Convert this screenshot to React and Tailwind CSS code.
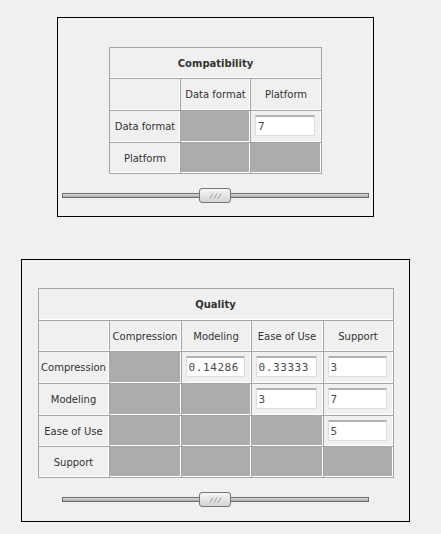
const sans = "font-['DejaVu_Sans',sans-serif]"

function Cell({ kind, value, height }) {
    const base = `border-l border-t border-[#a5a5a5] shadow-[inset_-1px_-1px_0_#ffffff] ${height}`
    if (kind === 'gray') return <div className={`${base} bg-[#acacac]`} />
    if (kind === 'input') {
        return (
            <div className={base}>
                <input
                    readOnly
                    value={value}
                    className="mt-[4px] ml-[4px] block h-[21px] w-[calc(100%-10px)] border border-[#dedede] border-t-2 border-t-[#b3b3b3] bg-white pl-[2px] font-['DejaVu_Sans_Mono',monospace] text-[11px] tracking-[0.6px] text-[#4a4a4a] outline-none"
                />
            </div>
        )
    }
    return (
        <div className={`${base} flex items-center justify-center text-[10px] text-[#333]`}>{value}</div>
    )
}

function Matrix({ title, labels, cells, cols, heights }) {
    return (
        <div className={`grid ${cols} border-r border-b border-[#a5a5a5] ${sans}`}>
            <div className={`col-span-full flex items-center justify-center border-l border-t border-[#a5a5a5] shadow-[inset_0_-1px_0_#ffffff] text-[10px] font-bold text-[#333] ${heights[0]}`}>
                {title}
            </div>
            <Cell kind="label" value="" height={heights[1]} />
            {labels.map((l) => (
                <Cell key={l} kind="label" value={l} height={heights[1]} />
            ))}
            {labels.map((row, i) => (
                <div key={row} className="contents">
                    <Cell kind="label" value={row} height={heights[i + 2]} />
                    {cells[i].map((c, j) =>
                        c === null ? (
                            <Cell key={j} kind="gray" height={heights[i + 2]} />
                        ) : (
                            <Cell key={j} kind="input" value={c} height={heights[i + 2]} />
                        )
                    )}
                </div>
            ))}
        </div>
    )
}

function Slider() {
    return (
        <div className="relative h-[15px] w-[307px]">
            <div className="absolute left-0 right-0 top-[5px] h-[5px] border border-[#6e6e6e] bg-gradient-to-b from-[#dcdcdc] to-[#a9a9a9]" />
            <div className="absolute left-[137px] top-0 flex h-[15px] w-[32px] items-center justify-center rounded-[3px] border border-[#767676] bg-gradient-to-b from-[#f6f6f6] to-[#d4d4d4]">
                <svg width="13" height="6" viewBox="0 0 13 6">
                    <path d="M1 5.5 L4 0.5 M5 5.5 L8 0.5 M9 5.5 L12 0.5" stroke="#9a9a9a" strokeWidth="1" fill="none" />
                </svg>
            </div>
        </div>
    )
}

export default function App() {
    return (
        <div className="min-h-[534px] w-[441px] bg-[#f0f0f0] pt-[17px]">
            <div className="ml-[57px] flex h-[200px] w-[317px] flex-col items-center border border-black pt-[29px]">
                <Matrix
                    title="Compatibility"
                    labels={['Data format', 'Platform']}
                    cells={[
                        [null, '7'],
                        [null, null],
                    ]}
                    cols="grid-cols-[71px_70px_71px]"
                    heights={['h-[31px]', 'h-[32px]', 'h-[32px]', 'h-[31px]']}
                />
                <div className="mt-[14px]">
                    <Slider />
                </div>
            </div>

            <div className="ml-[21px] mt-[42px] flex h-[263px] w-[389px] flex-col items-center border border-black pt-[28px]">
                <Matrix
                    title="Quality"
                    labels={['Compression', 'Modeling', 'Ease of Use', 'Support']}
                    cells={[
                        [null, '0.14286', '0.33333', '3'],
                        [null, null, '3', '7'],
                        [null, null, null, '5'],
                        [null, null, null, null],
                    ]}
                    cols="grid-cols-[71px_72px_70px_72px_70px]"
                    heights={['h-[32px]', 'h-[31px]', 'h-[32px]', 'h-[32px]', 'h-[31px]', 'h-[31px]']}
                />
                <div className="mt-[14px]">
                    <Slider />
                </div>
            </div>
        </div>
    )
}
